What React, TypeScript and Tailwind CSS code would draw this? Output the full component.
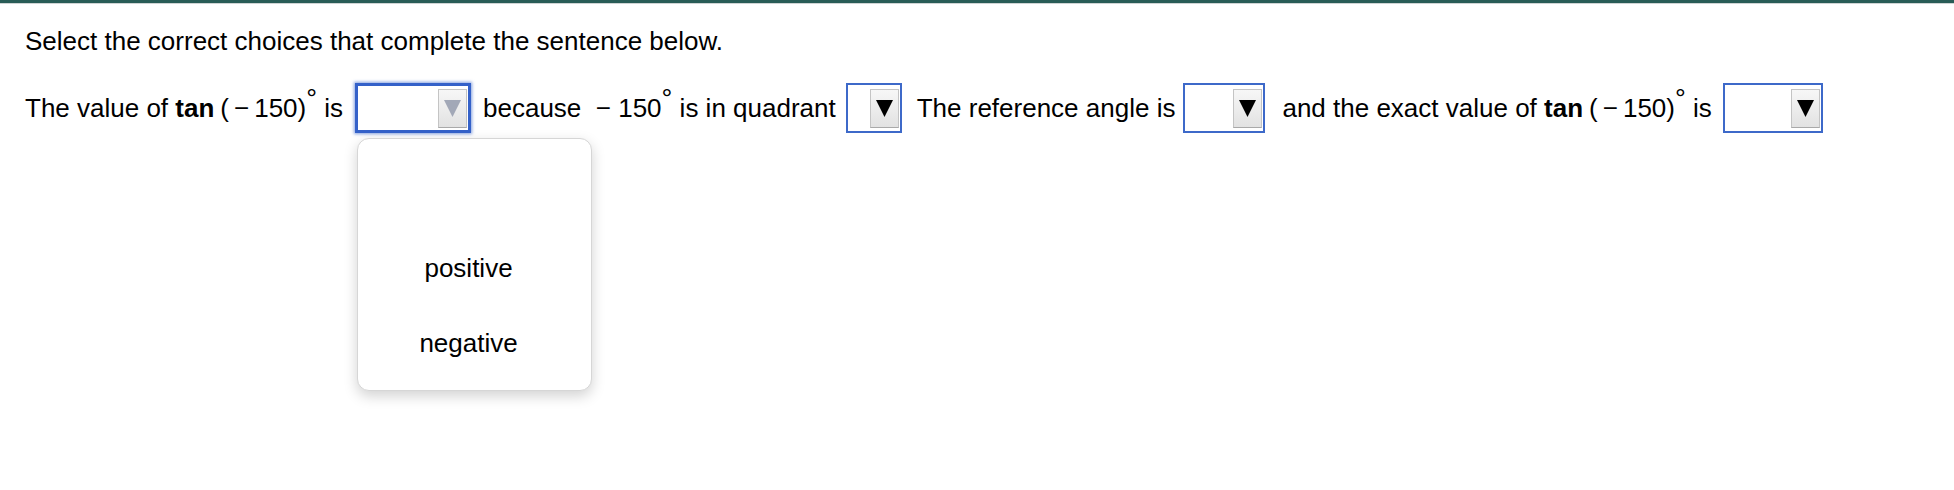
import type { ReactNode } from 'react';

function Deg() {
  return <span className="relative -top-[9px] text-[27px] leading-none">°</span>;
}

function Tan() {
  return (
    <>
      <b className="font-bold">tan</b>
      <span className="ml-[6px]">(</span>
      <span className="mx-[5px]">−</span>
      <span>150)</span>
      <Deg />
    </>
  );
}

function Arrow({ muted }: { muted?: boolean }) {
  return (
    <svg width="17" height="17" viewBox="0 0 17 17">
      <polygon points="0,0 17,0 8.5,17" fill={muted ? '#a2a8b7' : '#000'} />
    </svg>
  );
}

function Select({ width, focused, children }: { width: string; focused?: boolean; children?: ReactNode }) {
  return (
    <div
      className={`relative flex h-[50px] shrink-0 items-center justify-end bg-white pr-[1px] ${width} ${
        focused
          ? 'border-[3px] border-[#3461c9] shadow-[0_0_3px_1px_rgba(52,97,201,0.6)]'
          : 'border-2 border-[#3d69c9]'
      }`}
    >
      <div className="flex h-[39px] w-[29px] items-center justify-center border border-[#c4c4c4] border-b-[#a9a9a9] bg-gradient-to-b from-[#f7f7f7] to-[#e2e2e2]">
        <Arrow muted={focused} />
      </div>
      {children}
    </div>
  );
}

export default function App() {
  return (
    <div className="h-[490px] w-[1954px] overflow-hidden bg-white font-['Liberation_Sans',Arial,sans-serif] text-[26px] text-black">
      <div className="h-[3px] bg-[#285c56]" />
      <div className="h-px bg-[#cfd4d4]" />
      <div className="pl-[25px] pt-[22px]">
        <p className="leading-[30px]">Select the correct choices that complete the sentence below.</p>
        <div className="mt-[27px] flex items-center whitespace-pre leading-[30px]">
          <span>The value of </span>
          <Tan />
          <span> is</span>
          <div className="ml-[12px] mr-[12px]">
            <Select width="w-[116px]" focused>
              <div className="absolute -left-[1px] top-[52px] z-10 flex h-[253px] w-[235px] flex-col rounded-[12px] border border-[#d6d6d6] bg-white pb-[10px] pr-[12px] pt-[18px] shadow-[0_5px_14px_rgba(0,0,0,0.18)]">
                <div className="h-[75px]" />
                <div className="flex h-[75px] items-center justify-center">positive</div>
                <div className="flex h-[75px] items-center justify-center">negative</div>
              </div>
            </Select>
          </div>
          <span>because  − 150</span>
          <Deg />
          <span> is in quadrant</span>
          <div className="ml-[10px] mr-[15px]">
            <Select width="w-[56px]" />
          </div>
          <span>The reference angle is</span>
          <div className="ml-[8px] mr-[17px]">
            <Select width="w-[82px]" />
          </div>
          <span>and the exact value of </span>
          <Tan />
          <span> is</span>
          <div className="ml-[11px]">
            <Select width="w-[100px]" />
          </div>
        </div>
      </div>
    </div>
  );
}
